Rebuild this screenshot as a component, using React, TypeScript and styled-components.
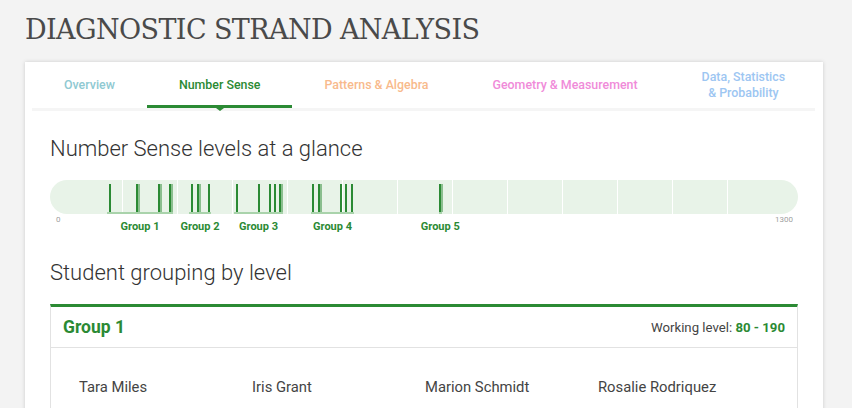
import React from "react";
import styled, { createGlobalStyle } from "styled-components";

const Global = createGlobalStyle`
  html, body { margin: 0; padding: 0; background: #f3f3f3; }
  body { font-family: Roboto, "Noto Sans", Arial, sans-serif; color: #444; }
  * { box-sizing: border-box; }
`;

const GREEN = "#2b8a34";

const Page = styled.div`
  padding: 0 29px 0 25px;
  width: 852px;
  height: 408px;
  overflow: hidden;
`;

const Title = styled.h1`
  margin: 0;
  padding-top: 10px;
  height: 62px;
  font-family: "DejaVu Serif", "Liberation Serif", serif;
  font-weight: 400;
  font-size: 27px;
  line-height: 40px;
  color: #4a4a4a;
  letter-spacing: -0.6px;
  white-space: nowrap;
`;

const Card = styled.div`
  background: #fff;
  box-shadow: 0 0 4px rgba(0, 0, 0, 0.16);
  min-height: 400px;
`;

const TabBar = styled.nav`
  margin: 0 8px 0 7px;
  display: flex;
  align-items: stretch;
  border-bottom: 3px solid #f5f5f5;
`;

const Tab = styled.div<{ $color: string; $active?: boolean }>`
  position: relative;
  flex-shrink: 0;
  height: 46px;
  padding: 3px 32px 0;
  display: flex;
  align-items: center;
  justify-content: center;
  text-align: center;
  white-space: nowrap;
  font-size: 12.4px;
  font-weight: 500;
  line-height: 16px;
  color: ${(p) => p.$color};
  border-bottom: 3px solid ${(p) => (p.$active ? GREEN : "transparent")};
  &::after {
    content: "";
    display: ${(p) => (p.$active ? "block" : "none")};
    position: absolute;
    left: 50%;
    bottom: -6px;
    transform: translateX(-50%);
    border-left: 4px solid transparent;
    border-right: 4px solid transparent;
    border-top: 3px solid ${GREEN};
  }
`;

const Content = styled.div`
  padding: 24px 25px 0;
`;

const Heading = styled.h2`
  margin: 0;
  font-size: 22px;
  font-weight: 300;
  line-height: 28px;
  color: #333;
`;

const Chart = styled.div`
  position: relative;
  margin-top: 17px;
`;

const Bar = styled.div`
  position: relative;
  height: 34px;
  border-radius: 17px;
  background: #e8f3e8;
  overflow: hidden;
  display: grid;
  grid-template-columns: 72px repeat(11, 55px) 1fr;
`;

const Segment = styled.div<{ $first?: boolean }>`
  border-left: ${(p) => (p.$first ? "none" : "1px solid #fff")};
`;

const ScaleRow = styled.div`
  display: flex;
  justify-content: space-between;
  padding: 1px 5px 0 6px;
  height: 45px;
  font-size: 8px;
  line-height: 10px;
  color: #a0a0a0;
`;

const GroupSpan = styled.div`
  position: absolute;
  top: 4px;
  height: 30px;
`;

const Tick = styled.div<{ $light?: boolean }>`
  position: absolute;
  top: 0;
  width: 2px;
  height: 28px;
  background: ${(p) => (p.$light ? "rgba(43,138,52,0.5)" : GREEN)};
`;

const Underline = styled.div`
  position: absolute;
  left: 0;
  right: 0;
  bottom: 0;
  height: 2px;
  background: #a9d3ab;
`;

const GroupLabel = styled.div`
  position: absolute;
  top: 36px;
  left: 50%;
  transform: translateX(-50%);
  white-space: nowrap;
  font-size: 11px;
  font-weight: 700;
  line-height: 14px;
  color: ${GREEN};
`;

const GroupCard = styled.section`
  margin-top: 17px;
  border: 1px solid #e2e2e2;
  border-top: 3px solid ${GREEN};
`;

const GroupHeader = styled.header`
  display: flex;
  justify-content: space-between;
  align-items: center;
  height: 41px;
  padding: 0 12px 0 12px;
  border-bottom: 1px solid #e2e2e2;
`;

const GroupName = styled.div`
  font-size: 17.5px;
  font-weight: 700;
  color: ${GREEN};
`;

const Level = styled.div`
  font-size: 13.2px;
  color: #444;
  b {
    color: ${GREEN};
    font-weight: 700;
  }
`;

const Names = styled.div`
  display: grid;
  grid-template-columns: repeat(4, 173px);
  padding: 30px 0 20px 28px;
`;

const Name = styled.div`
  font-size: 14.8px;
  line-height: 18px;
  color: #444;
`;

type TickDef = [number, boolean?];
const BAR_LEFT = 50;

const groups: { name: string; from: number; to: number; ticks: TickDef[] }[] = [
  { name: "Group 1", from: 107, to: 173, ticks: [[109], [135.5], [137.5, true], [157.5], [159.5, true], [169], [171, true]] },
  { name: "Group 2", from: 189, to: 211, ticks: [[190.5], [196.5], [198.5, true], [207.5]] },
  { name: "Group 3", from: 234, to: 283, ticks: [[235.5], [257.5], [268.5], [273.5], [279], [281, true]] },
  { name: "Group 4", from: 311, to: 354, ticks: [[312], [318], [320, true], [339.5], [345], [351]] },
  { name: "Group 5", from: 438.5, to: 442, ticks: [[439], [440.5, true]] },
];

const tabs = [
  { label: "Overview", color: "#8fc9d2" },
  { label: "Number Sense", color: GREEN, active: true },
  { label: "Patterns & Algebra", color: "#f8ba8c" },
  { label: "Geometry & Measurement", color: "#f08bd9" },
  { label: "Data, Statistics\n& Probability", color: "#9dc6f2" },
];

const students = ["Tara Miles", "Iris Grant", "Marion Schmidt", "Rosalie Rodriquez"];

export default function App() {
  return (
    <Page>
      <Global />
      <Title>DIAGNOSTIC STRAND ANALYSIS</Title>
      <Card>
        <TabBar>
          {tabs.map((t) => (
            <Tab key={t.label} $color={t.color} $active={t.active}>
              <span>
                {t.label.split("\n").map((line, i) => (
                  <React.Fragment key={i}>
                    {i > 0 && <br />}
                    {line}
                  </React.Fragment>
                ))}
              </span>
            </Tab>
          ))}
        </TabBar>
        <Content>
          <Heading>Number Sense levels at a glance</Heading>
          <Chart>
            <Bar>
              {Array.from({ length: 13 }).map((_, i) => (
                <Segment key={i} $first={i === 0} />
              ))}
            </Bar>
            {groups.map((g) => (
              <GroupSpan
                key={g.name}
                style={{ left: g.from - BAR_LEFT, width: g.to - g.from }}
              >
                {g.ticks.map(([x, light], i) => (
                  <Tick key={i} $light={light} style={{ left: x - g.from }} />
                ))}
                <Underline />
                <GroupLabel>{g.name}</GroupLabel>
              </GroupSpan>
            ))}
            <ScaleRow>
              <span>0</span>
              <span>1300</span>
            </ScaleRow>
          </Chart>
          <Heading>Student grouping by level</Heading>
          <GroupCard>
            <GroupHeader>
              <GroupName>Group 1</GroupName>
              <Level>
                Working level: <b>80 - 190</b>
              </Level>
            </GroupHeader>
            <Names>
              {students.map((s) => (
                <Name key={s}>{s}</Name>
              ))}
            </Names>
          </GroupCard>
        </Content>
      </Card>
    </Page>
  );
}
